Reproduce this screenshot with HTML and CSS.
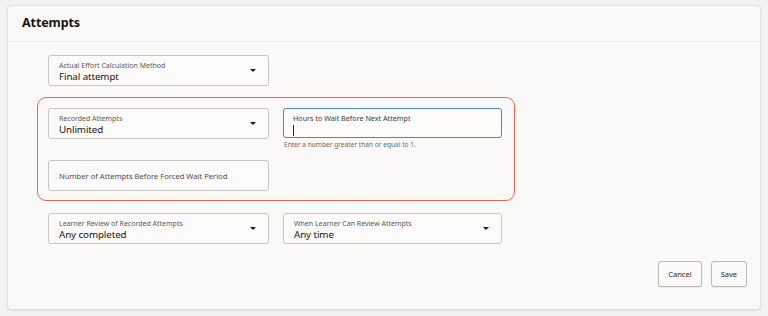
FILE: index.html
```html
<!DOCTYPE html>
<html lang="en">
<head>
    <meta charset="UTF-8">
    <meta name="viewport" content="width=device-width, initial-scale=1.0">
    <title>Attempts</title>
    <link rel="stylesheet" href="styles.css">
</head>
<body>
    <div class="card">
        <div class="card-header">
            <h2>Attempts</h2>
        </div>

        <div class="card-body">
            <div class="row outside">
                <div class="field select">
                    <span class="field-label">Actual Effort Calculation Method</span>
                    <span class="field-value">Final attempt</span>
                    <span class="caret"></span>
                </div>
            </div>

            <div class="highlight">
                <div class="row">
                    <div class="field select">
                        <span class="field-label">Recorded Attempts</span>
                        <span class="field-value">Unlimited</span>
                        <span class="caret"></span>
                    </div>
                    <div class="field-wrap">
                        <div class="field focused">
                            <span class="field-label strong">Hours to Wait Before Next Attempt</span>
                            <span class="cursor"></span>
                        </div>
                        <div class="helper">Enter a number greater than or equal to 1.</div>
                    </div>
                </div>
                <div class="row">
                    <div class="field empty">
                        <span class="placeholder">Number of Attempts Before Forced Wait Period</span>
                    </div>
                </div>
            </div>

            <div class="row outside">
                <div class="field select">
                    <span class="field-label">Learner Review of Recorded Attempts</span>
                    <span class="field-value">Any completed</span>
                    <span class="caret"></span>
                </div>
                <div class="field select narrow">
                    <span class="field-label">When Learner Can Review Attempts</span>
                    <span class="field-value">Any time</span>
                    <span class="caret"></span>
                </div>
            </div>
        </div>

        <div class="actions">
            <button class="btn">Cancel</button>
            <button class="btn">Save</button>
        </div>
    </div>
</body>
</html>
```

FILE: styles.css
```css
* {
    margin: 0;
    padding: 0;
    box-sizing: border-box;
}

body {
    font-family: 'Noto Sans', 'Open Sans', sans-serif;
    background: #f3f2f0;
    padding: 5px 7px 6px 7px;
    color: #161513;
}

.card {
    background: #faf9f8;
    border: 1px solid #e4e2df;
    border-radius: 4px;
    box-shadow: 0 1px 2px rgba(0, 0, 0, 0.08);
    height: 305px;
    width: 754px;
}

.card-header {
    height: 36px;
    padding: 9px 14px 0 14px;
    border-bottom: 1px solid #e8e6e3;
}

.card-header h2 {
    font-size: 12.5px;
    font-weight: 700;
    line-height: 16px;
    letter-spacing: -0.1px;
}

.card-body {
    padding: 13px 0 0 29px;
}

.row {
    display: flex;
    gap: 14px;
    align-items: flex-start;
}

.row.outside {
    padding-left: 11px;
}

.highlight {
    width: 478px;
    height: 104px;
    margin: 11px 0 12px 0;
    padding: 10px 0 0 10px;
    border: 1.5px solid #f0644f;
    border-radius: 9px;
    display: flex;
    flex-direction: column;
    gap: 10px;
}

.field {
    position: relative;
    width: 221px;
    height: 31px;
    border: 1px solid #c9c7c4;
    border-radius: 3px;
    background: #fcfbfa;
    padding: 5px 10px 0 10px;
    display: flex;
    flex-direction: column;
}

.field.narrow {
    width: 219px;
}

.field-wrap {
    display: flex;
    flex-direction: column;
}

.field.focused {
    width: 219px;
    height: 30px;
    border: 1.5px solid #4d8db4;
    padding: 4px 9px 0 9px;
}

.field-label {
    font-size: 7px;
    line-height: 9px;
    color: #5c5955;
}

.field-label.strong {
    font-size: 7.2px;
    color: #3f3c39;
    padding-top: 1px;
}

.field-value {
    font-size: 9.8px;
    line-height: 13px;
    color: #161513;
    letter-spacing: -0.1px;
}

.cursor {
    display: block;
    width: 1px;
    height: 11px;
    margin-top: 2px;
    background: #2b2926;
}

.field.empty {
    justify-content: center;
    padding-top: 0;
}

.placeholder {
    font-size: 7.6px;
    color: #4f4c49;
}

.caret {
    position: absolute;
    right: 12px;
    top: 13px;
    width: 0;
    height: 0;
    border-left: 3px solid transparent;
    border-right: 3px solid transparent;
    border-top: 3.5px solid #1e1c1a;
}

.helper {
    font-size: 6.6px;
    line-height: 10px;
    color: #6b6865;
    margin-top: 2px;
    padding-left: 1px;
}

.actions {
    display: flex;
    justify-content: flex-end;
    gap: 9px;
    padding: 17px 13px 0 0;
}

.btn {
    font-family: 'Noto Sans', 'Open Sans', sans-serif;
    font-size: 7.5px;
    color: #2b2926;
    background: #fbfaf9;
    border: 1px solid #bdbab6;
    border-radius: 3px;
    height: 26px;
    padding: 0 9px;
    box-shadow: 0 1px 1px rgba(0, 0, 0, 0.06);
}
```
